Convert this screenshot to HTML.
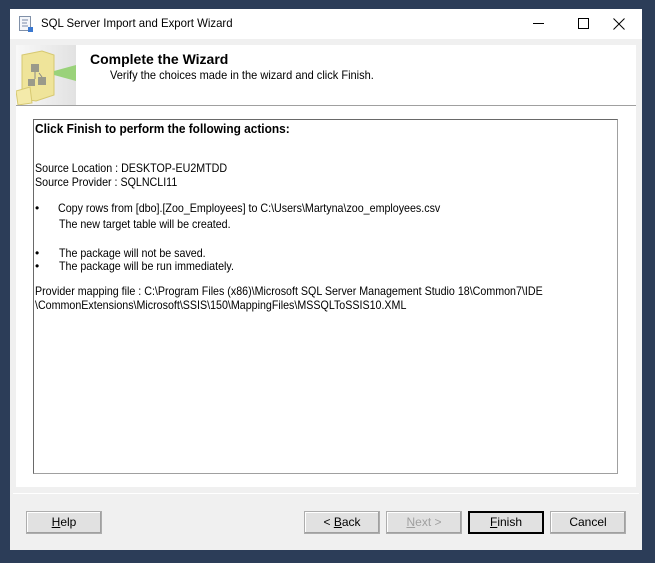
<!DOCTYPE html>
<html><head><meta charset="utf-8"><style>
*{margin:0;padding:0;box-sizing:border-box}
body{width:655px;height:563px;background:#2c3d58;position:relative;overflow:hidden;font-family:"Liberation Sans",Arial,sans-serif;font-size:12px;color:#000}
.win{position:absolute;left:10px;top:9px;width:632px;height:541px;background:#f0f0f0}
.tb{position:absolute;left:0;top:0;width:632px;height:30px;background:#fff}
.a{position:absolute;white-space:nowrap}
.hdr{position:absolute;left:6px;top:36px;width:620px;height:60px;background:#fff}
.sep{position:absolute;left:6px;top:96px;width:620px;height:1px;background:#a0a0a0}
.panel{position:absolute;left:6px;top:97px;width:620px;height:381px;background:#fff}
.box{position:absolute;left:23px;top:110px;width:585px;height:355px;border:1px solid #a0a0a0;border-top-color:#696969;border-left-color:#696969;background:#fff}
.bsep{position:absolute;left:3px;top:484px;width:626px;height:1px;background:#a0a0a0;border-bottom:1px solid #fff}
.btn{position:absolute;top:502px;width:76px;height:23px;background:#e1e1e1;border:1px solid #adadad;box-shadow:inset -1px -1px #a0a0a0, inset 1px 1px #fff;text-align:center;line-height:21px;font-size:12px}
.t{font-size:12px;transform:scaleX(0.92);transform-origin:0 0}
.box .t{transform:scaleX(0.89)}
</style></head><body>
<div class="win">
 <div class="tb">
  <svg class="a" style="left:8px;top:7px" width="16" height="16"><rect x="1.5" y="0.5" width="11" height="14" fill="#f4f6fa" stroke="#8090a8"/><path d="M4 4h6M4 7h5M4 10h6" stroke="#7a8aa8"/><rect x="10" y="11" width="5" height="5" fill="#3a78d0"/></svg>
  <div class="a t" style="left:31px;top:7px;transform:scaleX(0.95)">SQL Server Import and Export Wizard</div>
  <div class="a" style="left:523px;top:14px;width:11px;height:1px;background:#000"></div>
  <div class="a" style="left:568px;top:9px;width:11px;height:11px;border:1px solid #000"></div>
  <svg class="a" style="left:603px;top:9px" width="12" height="12"><path d="M0.5 0.5L11.5 11.5M11.5 0.5L0.5 11.5" stroke="#000"/></svg>
 </div>
 <div class="hdr">
  <div class="a" style="left:0;top:0;width:60px;height:60px;background:linear-gradient(90deg,#f8f8f8,#e2e2e2)"></div>
  <svg class="a" style="left:0;top:4px" width="60" height="56">
   <path d="M6 6L26 2L38 6V46L20 52L6 50Z" fill="#efe49a" stroke="#d6c870"/>
   <path d="M0 42L14 38L16 54L2 56Z" fill="#f4eaaa" stroke="#d6c870"/>
   <rect x="15" y="15" width="8" height="8" fill="#9a9a8a"/><rect x="22" y="28" width="8" height="8" fill="#9a9a8a"/><rect x="12" y="30" width="7" height="7" fill="#9a9a8a"/>
   <path d="M19 23V30M23 24L26 28" stroke="#888" fill="none"/>
   <path d="M38 22L60 16V32L38 26Z" fill="#9ad27a"/>
  </svg>
  <div class="a" style="left:74px;top:6px;font-size:14px;font-weight:bold">Complete the Wizard</div>
  <div class="a t" style="left:94px;top:23px">Verify the choices made in the wizard and click Finish.</div>
 </div>
 <div class="sep"></div>
 <div class="panel"></div>
 <div class="box">
  <div class="a" style="left:1px;top:2px;font-weight:bold;font-size:12.5px;transform:scaleX(0.95);transform-origin:0 0">Click Finish to perform the following actions:</div>
  <div class="a t" style="left:1px;top:41px">Source Location : DESKTOP-EU2MTDD</div>
  <div class="a t" style="left:1px;top:55px">Source Provider : SQLNCLI11</div>
  <div class="a" style="left:1px;top:81px">•</div>
  <div class="a t" style="left:24px;top:81px">Copy rows from [dbo].[Zoo_Employees] to C:\Users\Martyna\zoo_employees.csv</div>
  <div class="a t" style="left:25px;top:97px">The new target table will be created.</div>
  <div class="a" style="left:1px;top:126px">•</div>
  <div class="a t" style="left:25px;top:126px">The package will not be saved.</div>
  <div class="a" style="left:1px;top:139px">•</div>
  <div class="a t" style="left:25px;top:139px">The package will be run immediately.</div>
  <div class="a t" style="left:1px;top:164px">Provider mapping file : C:\Program Files (x86)\Microsoft SQL Server Management Studio 18\Common7\IDE</div>
  <div class="a t" style="left:1px;top:178px">\CommonExtensions\Microsoft\SSIS\150\MappingFiles\MSSQLToSSIS10.XML</div>
 </div>
 <div class="bsep"></div>
 <div class="btn" style="left:16px"><u>H</u>elp</div>
 <div class="btn" style="left:294px">&lt; <u>B</u>ack</div>
 <div class="btn" style="left:376px;color:#a0a0a0"><u>N</u>ext &gt;</div>
 <div class="btn" style="left:458px;border:1px solid #000;box-shadow:inset 0 0 0 1px #000"><u>F</u>inish</div>
 <div class="btn" style="left:540px">Cancel</div>
</div>
</body></html>
